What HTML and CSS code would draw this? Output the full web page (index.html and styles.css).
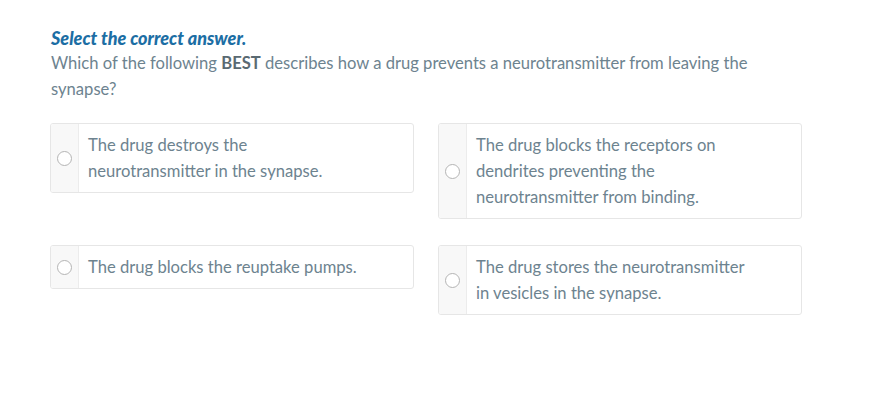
FILE: index.html
```html
<!DOCTYPE html>
<html lang="en">

<head>
    <meta charset="UTF-8">
    <meta name="viewport" content="width=device-width, initial-scale=1.0">
    <title>Select the correct answer</title>
    <link rel="stylesheet" href="styles.css">
</head>

<body>
    <div class="question">
        <h2 class="prompt">Select the correct answer.</h2>
        <p class="stem">Which of the following <strong>BEST</strong> describes how a drug prevents a neurotransmitter from leaving the synapse?</p>

        <div class="choices">
            <label class="choice">
                <span class="choice-radio"><span class="radio"></span></span>
                <span class="choice-text">The drug destroys the<br>neurotransmitter in the synapse.</span>
            </label>
            <label class="choice">
                <span class="choice-radio"><span class="radio"></span></span>
                <span class="choice-text">The drug blocks the receptors on<br>dendrites preventing the<br>neurotransmitter from binding.</span>
            </label>
            <label class="choice">
                <span class="choice-radio"><span class="radio"></span></span>
                <span class="choice-text">The drug blocks the reuptake pumps.</span>
            </label>
            <label class="choice">
                <span class="choice-radio"><span class="radio"></span></span>
                <span class="choice-text">The drug stores the neurotransmitter<br>in vesicles in the synapse.</span>
            </label>
        </div>
    </div>
</body>

</html>
```

FILE: styles.css
```css
:root {
    --title-color: #1c6ea4;
    --text-color: #6d838f;
    --strong-color: #5a6a72;
    --border-color: #e6e6e6;
    --strip-color: #f8f8f8;
}

body {
    font-family: Lato, 'Open Sans', sans-serif;
    color: var(--text-color);
    background: white;
    margin: 0;
    padding: 0;
}

.question {
    width: 752px;
    padding: 26px 0 0 51px;
}

.prompt {
    margin: 0;
    font-size: 18px;
    line-height: 24px;
    font-style: italic;
    font-weight: 900;
    color: var(--title-color);
}

.stem {
    margin: 0;
    font-size: 16.6px;
    line-height: 26px;
}

.stem strong {
    color: var(--strong-color);
    font-weight: 700;
}

.choices {
    display: grid;
    grid-template-columns: 364px 364px;
    column-gap: 24px;
    row-gap: 26px;
    align-items: start;
    margin: 21px 0 0 -1px;
}

.choice {
    display: flex;
    border: 1px solid var(--border-color);
    border-radius: 3px;
    overflow: hidden;
    cursor: pointer;
}

.choice-radio {
    flex: 0 0 27px;
    display: flex;
    align-items: center;
    justify-content: center;
    background: var(--strip-color);
    border-right: 1px solid #ececec;
}

.radio {
    width: 13px;
    height: 13px;
    border: 1px solid #b4b4b4;
    border-radius: 50%;
    background: white;
}

.choice-text {
    padding: 8px 10px 8px 9px;
    font-size: 16.6px;
    line-height: 26px;
}
```
